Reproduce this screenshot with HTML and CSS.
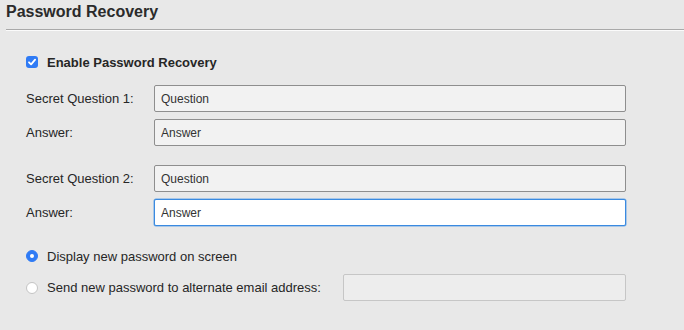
FILE: index.html
```html
<!DOCTYPE html>
<html>
<head>
<meta charset="utf-8">
<link rel="stylesheet" href="styles.css">
</head>
<body>
<div class="panel">
  <h1 class="title">Password Recovery</h1>
  <div class="body">
    <label class="check-row">
      <span class="checkbox"><svg viewBox="0 0 12 12" width="12" height="12"><path d="M3 6.3 L5.1 8.4 L9.1 3.6" fill="none" stroke="#fff" stroke-width="1.8" stroke-linecap="round" stroke-linejoin="round"/></svg></span>
      <span class="check-label">Enable Password Recovery</span>
    </label>

    <div class="group">
      <div class="field"><span class="label">Secret Question 1:</span><input class="input" type="text" value="Question"></div>
      <div class="field"><span class="label">Answer:</span><input class="input" type="text" value="Answer"></div>
    </div>

    <div class="group group-2">
      <div class="field"><span class="label">Secret Question 2:</span><input class="input" type="text" value="Question"></div>
      <div class="field"><span class="label">Answer:</span><input class="input focused" type="text" value="Answer"></div>
    </div>

    <div class="radio-row first">
      <span class="radio on"></span>
      <span class="radio-label">Display new password on screen</span>
    </div>
    <div class="radio-row second">
      <span class="radio"></span>
      <span class="radio-label">Send new password to alternate email address:</span>
      <input class="email" type="text" disabled>
    </div>
  </div>
</div>
</body>
</html>
```
FILE: styles.css
```css
* { box-sizing: border-box; }
html, body {
  margin: 0;
  padding: 0;
  background: #e8e8e8;
  font-family: "Liberation Sans", Arial, sans-serif;
  color: #262626;
}
body { width: 684px; height: 330px; overflow: hidden; }

.title {
  margin: 0 0 0 6px;
  padding: 0;
  height: 30px;
  line-height: 24px;
  font-size: 16px;
  font-weight: bold;
  color: #2b2b2b;
  border-bottom: 1px solid #a9a9a9;
  box-shadow: 0 1px 0 #fbfbfb;
}

.body { padding-left: 26px; }

.check-row {
  display: flex;
  align-items: center;
  height: 14px;
  margin-top: 25px;
}
.checkbox {
  width: 12px;
  height: 12px;
  border-radius: 3px;
  background: #2f7bf5;
  display: flex;
}
.check-label {
  margin-left: 9px;
  font-size: 13px;
  font-weight: bold;
  color: #262626;
}

.group {
  display: flex;
  flex-direction: column;
  gap: 7px;
  margin-top: 16px;
}
.group-2 { margin-top: 19px; }

.field {
  display: flex;
  align-items: center;
}
.label {
  width: 128px;
  font-size: 13px;
  color: #262626;
}
.input {
  width: 472px;
  height: 27px;
  margin: 0;
  padding: 0 6px;
  border: 1px solid #8e8e8e;
  border-radius: 2px;
  background: #f2f2f2;
  font-family: "Liberation Sans", Arial, sans-serif;
  font-size: 12px;
  color: #333;
  outline: none;
}
.input.focused {
  background: #fff;
  border-color: #3a8ae0;
  box-shadow: 0 0 0 0.5px #6aa6e6;
}

.radio-row {
  display: flex;
  align-items: center;
  width: 600px;
}
.radio-row.first { height: 14px; margin-top: 23px; }
.radio-row.second { height: 27px; margin-top: 11px; }

.radio {
  width: 12px;
  height: 12px;
  border-radius: 50%;
  background: #fff;
  border: 1px solid #c4c4c4;
  position: relative;
}
.radio.on {
  background: #2f7bf5;
  border-color: #2f7bf5;
}
.radio.on::after {
  content: "";
  position: absolute;
  left: 3px;
  top: 3px;
  width: 4px;
  height: 4px;
  border-radius: 50%;
  background: #fff;
}
.radio-label {
  margin-left: 9px;
  font-size: 13px;
  color: #262626;
}
.email {
  margin: 0 0 0 auto;
  width: 283px;
  height: 27px;
  border: 1px solid #c6c6c6;
  border-radius: 2px;
  background: #ededed;
  padding: 0 6px;
}
```
